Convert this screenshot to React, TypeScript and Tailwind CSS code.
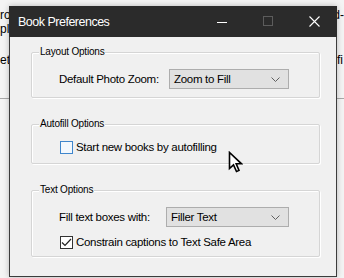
import React from "react";

const font = { fontFamily: '"Liberation Sans", Arial, sans-serif' };

function Chevron() {
  return (
    <svg width="9" height="5" viewBox="0 0 9 5" className="shrink-0">
      <path d="M0.5 0.5 L4.5 4.5 L8.5 0.5" fill="none" stroke="#606060" strokeWidth="1" />
    </svg>
  );
}

function Select({ value, width }: { value: string; width: string }) {
  return (
    <div className={`flex h-[20px] ${width} items-center justify-between border border-[#adadad] bg-[#e1e1e1] pl-[4px] pr-[8px] text-[11.5px] leading-[14px] tracking-[-0.3px] text-black`}>
      <span className="whitespace-nowrap">{value}</span>
      <Chevron />
    </div>
  );
}

function Group({ title, children, className }: { title: string; children: React.ReactNode; className: string }) {
  return (
    <div className={`relative rounded-[2px] border border-[#d5d5d5] shadow-[inset_1px_1px_0_#ffffff,1px_1px_0_#ffffff] ${className}`}>
      <span className="absolute left-[7px] top-[-7px] whitespace-nowrap bg-[#f0f0f0] px-[1px] text-[10px] leading-[12px] tracking-[-0.2px] text-black">
        {title}
      </span>
      {children}
    </div>
  );
}

export default function App() {
  return (
    <div className="relative h-[278px] w-[344px] overflow-hidden bg-[#f4f4f4] text-black" style={font}>
      {/* page behind the dialog */}
      <div className="flex flex-col pt-[8px] text-[12px] leading-[14px]">
        <div className="flex">
          <span className="w-[337px]">ro</span>
          <span>d-</span>
        </div>
        <div className="flex">
          <span className="w-[337px]">pl</span>
          <span></span>
        </div>
        <div className="mt-[17px] flex">
          <span className="w-[337px]">et</span>
          <span>fi</span>
        </div>
        <div className="mt-[31px] h-px w-full bg-[#a8a8a8]" />
      </div>

      {/* dialog window */}
      <div className="absolute left-[9px] top-[6px] flex h-[271px] w-[328px] flex-col border-x border-b border-[#3c3c3c] bg-[#f0f0f0] shadow-[0_0_6px_rgba(0,0,0,0.25)]">
        <div className="-mx-px flex h-[31px] shrink-0 items-center bg-[#2b2b2b]">
          <span className="ml-[9px] whitespace-nowrap text-[12.5px] leading-[16px] tracking-[-0.5px] text-white">Book Preferences</span>
          <div className="ml-auto flex h-full">
            <div className="flex w-[46px] items-center justify-center">
              <div className="mt-[1px] h-px w-[10px] bg-white" />
            </div>
            <div className="flex w-[46px] items-center justify-center">
              <div className="mb-[1px] h-[10px] w-[10px] border border-[#5c5c5c]" />
            </div>
            <div className="flex w-[46px] items-center justify-center">
              <svg width="11" height="11" viewBox="0 0 11 11">
                <path d="M0.5 0.5 L10.5 10.5 M10.5 0.5 L0.5 10.5" stroke="#ffffff" strokeWidth="1.1" />
              </svg>
            </div>
          </div>
        </div>

        <div className="flex flex-col gap-[26px] pl-[21px] pr-[16px] pt-[15px]">
          <Group title="Layout Options" className="h-[46px] pl-[27px] pt-[16px]">
            <div className="flex items-center text-[11.5px] leading-[14px] tracking-[-0.3px]">
              <span className="w-[110px] whitespace-nowrap">Default Photo Zoom:</span>
              <Select value="Zoom to Fill" width="w-[120px]" />
            </div>
          </Group>

          <Group title="Autofill Options" className="h-[40px] pl-[28px] pt-[15px]">
            <div className="flex items-center text-[11.5px] leading-[14px] tracking-[-0.3px]">
              <div className="h-[13px] w-[13px] shrink-0 border border-[#3f86cc] bg-[#f3f8fd]" />
              <span className="ml-[3px] whitespace-nowrap">Start new books by autofilling</span>
            </div>
          </Group>

          <Group title="Text Options" className="h-[67px] pl-[27px] pt-[16px]">
            <div className="flex items-center text-[11.5px] leading-[14px] tracking-[-0.3px]">
              <span className="w-[107px] whitespace-nowrap">Fill text boxes with:</span>
              <Select value="Filler Text" width="w-[123px]" />
            </div>
            <div className="mt-[8px] flex items-center pl-[1px] text-[11.5px] leading-[14px] tracking-[-0.3px]">
              <div className="flex h-[13px] w-[13px] shrink-0 items-center justify-center border border-[#333333] bg-white">
                <svg width="11" height="9" viewBox="0 0 11 9">
                  <path d="M1 4.5 L4 7.5 L10 1" fill="none" stroke="#222222" strokeWidth="1.2" />
                </svg>
              </div>
              <span className="ml-[3px] whitespace-nowrap">Constrain captions to Text Safe Area</span>
            </div>
          </Group>
        </div>
      </div>

      {/* mouse cursor */}
      <svg className="absolute left-[228px] top-[151px]" width="15" height="22" viewBox="0 0 15 22">
        <path
          d="M1.5 1.5 L1.5 17.5 L5.5 13.8 L8.5 20.5 L11 19.4 L8.2 12.8 L13.5 12.8 Z"
          fill="#ffffff"
          stroke="#000000"
          strokeWidth="1.6"
          strokeLinejoin="miter"
        />
      </svg>
    </div>
  );
}
